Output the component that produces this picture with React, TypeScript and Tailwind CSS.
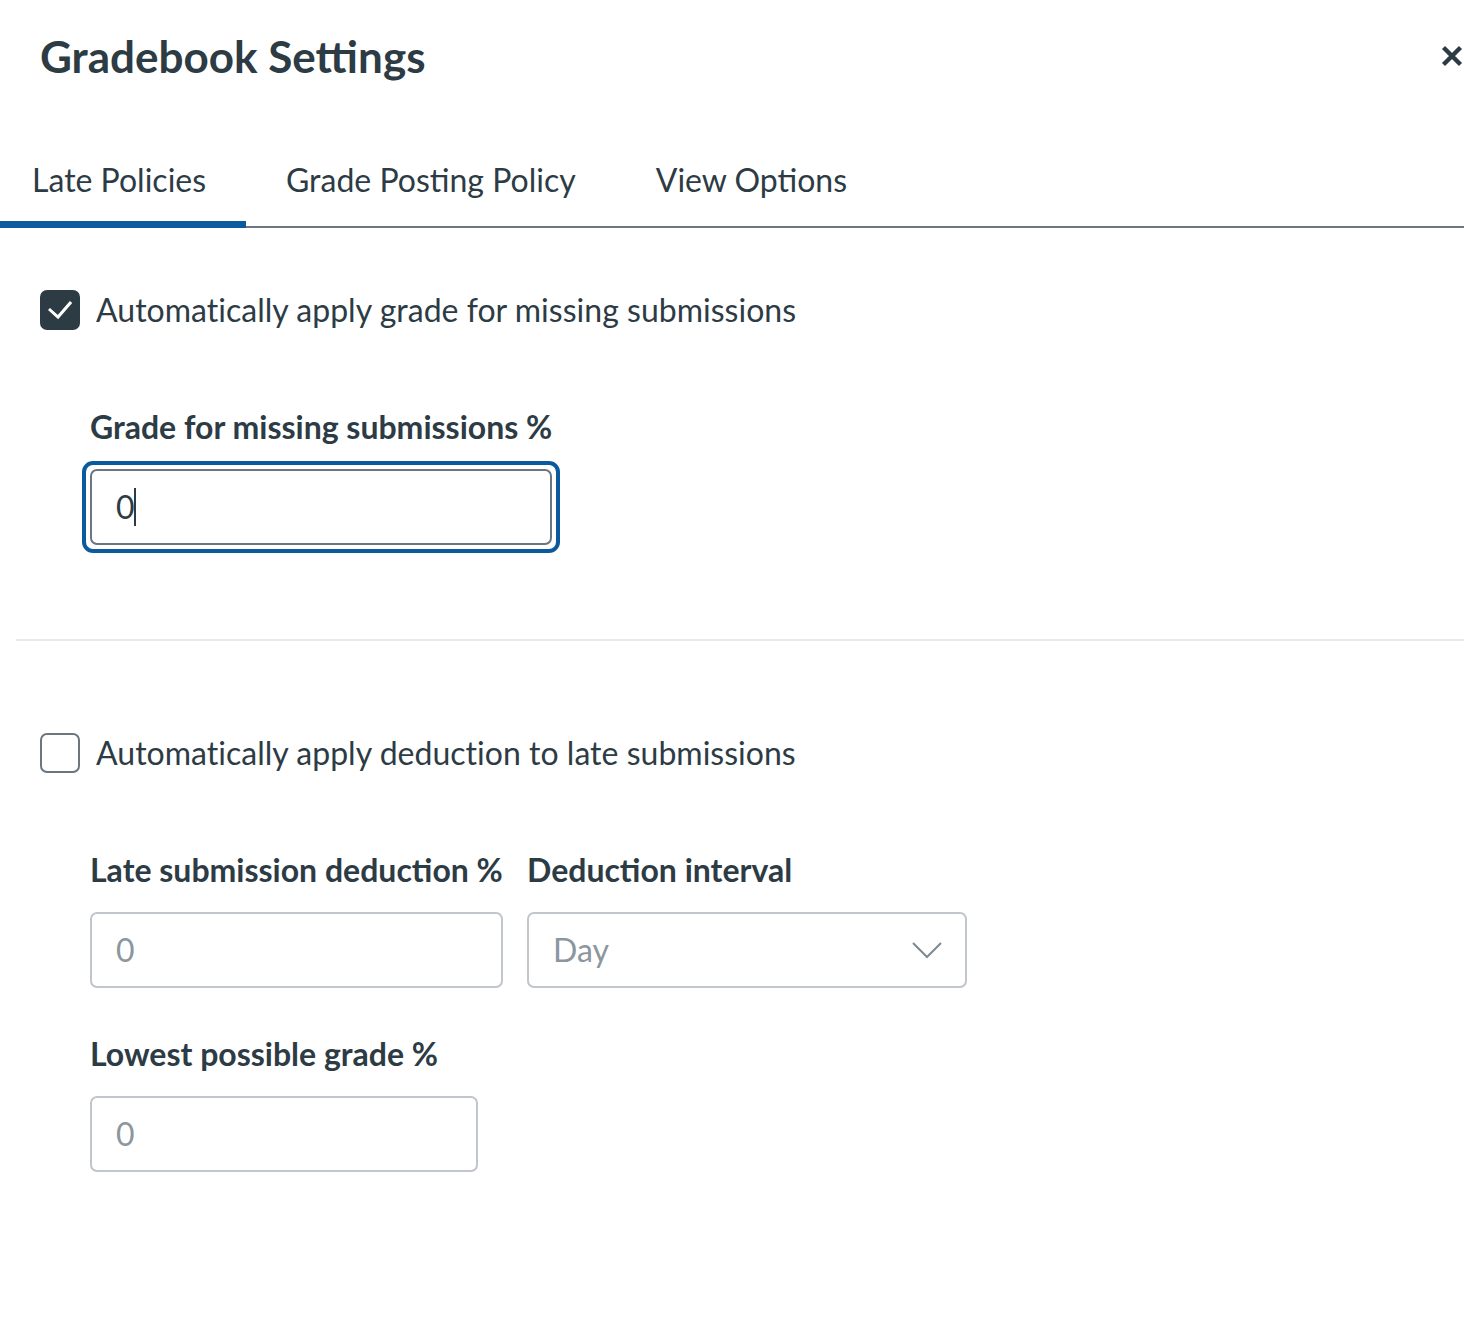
import React from "react";

const Cb = ({ checked }: { checked?: boolean }) => (
  <span className={checked
    ? "flex h-[40px] w-[40px] shrink-0 items-center justify-center rounded-[7px] bg-[#2d3b45]"
    : "flex h-[40px] w-[40px] shrink-0 items-center justify-center rounded-[7px] border-2 border-[#6b7780] bg-white"}>
    {checked && (
      <svg width="24" height="24" viewBox="0 0 24 24" fill="none" stroke="#fff" strokeWidth="3">
        <path d="M1 11l9 8L23 4" />
      </svg>
    )}
  </span>
);

const Label = ({ children }: { children: React.ReactNode }) => (
  <div className="text-[32px] leading-[40px] font-bold text-[#2d3b45]">{children}</div>
);

const Input = ({ w, children }: { w: string; children: React.ReactNode }) => (
  <div className={"flex h-[76px] items-center justify-between rounded-[7px] border-2 border-[#c0c6cb] bg-white pl-[24px] pr-[23px] text-[32px] text-[#8b969e] " + w}>
    {children}
  </div>
);

export default function App() {
  return (
    <div className="h-[1326px] w-[1464px] overflow-hidden bg-white font-['Lato','Noto_Sans',sans-serif] text-[#2d3b45]">
      <header className="flex h-[116px] items-start justify-between pl-[40px] pt-[28px]">
        <h1 className="text-[44px] leading-[56px] font-bold">Gradebook Settings</h1>
        <svg className="mr-[1px] mt-[17px]" width="22" height="22" viewBox="0 0 22 22" stroke="#2d3b45" strokeWidth="4.4">
          <path d="M2.5 2.5l17 17M19.5 2.5l-17 17" />
        </svg>
      </header>

      <nav className="flex h-[112px] border-b-2 border-[#6b7780] text-[32px] leading-[40px]">
        <div className="-mb-[2px] h-[112px] w-[246px] border-b-[7px] border-[#0b5a9d] pl-[32px] pt-[44px]">Late Policies</div>
        <div className="ml-[40px] pt-[44px]">Grade Posting Policy</div>
        <div className="ml-[80px] pt-[44px]">View Options</div>
      </nav>

      <section className="pl-[40px] pt-[62px]">
        <div className="flex items-center gap-[16px] text-[32px] leading-[40px] tracking-[0.02px]">
          <Cb checked />
          <span>Automatically apply grade for missing submissions</span>
        </div>
        <div className="pl-[50px] pt-[77px]">
          <Label>Grade for missing submissions %</Label>
          <div className="-ml-[8px] mt-[14px] flex h-[92px] w-[478px] items-center rounded-[11px] border-4 border-[#0b5a9d] p-[4px]">
            <div className="flex h-full w-full items-center rounded-[7px] border-2 border-[#6b7780] pl-[24px] text-[32px]">
              0<span className="-ml-[1px] h-[38px] w-[2px] bg-[#2d3b45]" />
            </div>
          </div>
        </div>
      </section>

      <hr className="ml-[16px] mt-[86px] border-t-2 border-[#e6e9ea]" />

      <section className="pl-[40px] pt-[92px]">
        <div className="flex items-center gap-[16px] text-[32px] leading-[40px] tracking-[0.02px]">
          <Cb />
          <span>Automatically apply deduction to late submissions</span>
        </div>
        <div className="pl-[50px] pt-[77px]">
          <div className="flex gap-[24px]">
            <div className="w-[413px]">
              <Label>Late submission deduction %</Label>
              <div className="mt-[22px]"><Input w="w-[413px]">0</Input></div>
            </div>
            <div className="w-[440px]">
              <Label>Deduction interval</Label>
              <div className="mt-[22px]">
                <Input w="w-[440px]">
                  <span>Day</span>
                  <svg width="30" height="18" viewBox="0 0 30 18" fill="none" stroke="#7d8a92" strokeWidth="2">
                    <path d="M1 2l14 14L29 2" />
                  </svg>
                </Input>
              </div>
            </div>
          </div>
          <div className="pt-[46px]">
            <Label>Lowest possible grade %</Label>
            <div className="mt-[22px]"><Input w="w-[388px]">0</Input></div>
          </div>
        </div>
      </section>
    </div>
  );
}
